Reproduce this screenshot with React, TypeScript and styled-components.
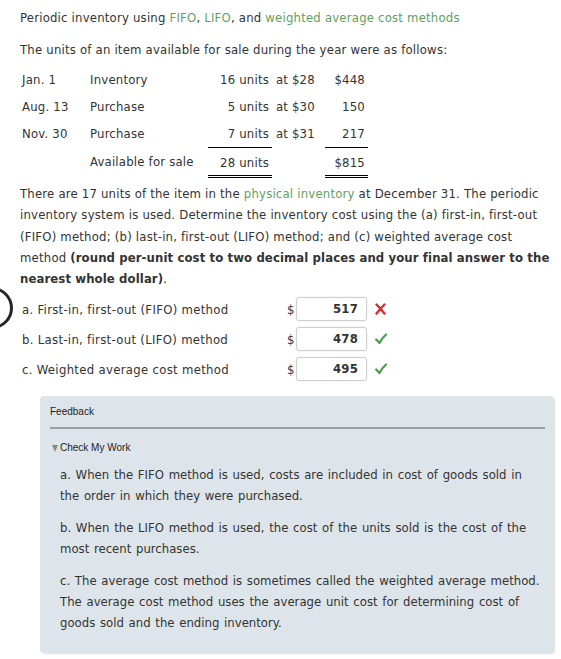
import React from 'react';
import styled, { createGlobalStyle } from 'styled-components';

const GlobalStyle = createGlobalStyle`
    body {
        margin: 0;
        background: #ffffff;
        font-family: 'DejaVu Sans Condensed', 'DejaVu Sans', sans-serif;
        font-size: 13px;
        letter-spacing: 0.2px;
        color: #333333;
    }
`;

const Page = styled.div`
    position: relative;
    width: 561px;
    height: 659px;
    overflow: hidden;
    padding: 7px 0 0 20px;
    box-sizing: border-box;
`;

const Line = styled.div`
    line-height: 21px;
    margin-bottom: 11px;
`;

const Term = styled.span`
    color: #5f9f5f;
`;

const Table = styled.div`
    display: grid;
    grid-template-columns: 68px 118px 64px 53px 43px;
    margin: -5px 0 0 2px;
`;

const Cell = styled.div<{ $right?: boolean; $top?: boolean; $total?: boolean }>`
    height: 27px;
    line-height: ${(p) => (p.$total ? '29px' : '27px')};
    text-align: ${(p) => (p.$right ? 'right' : 'left')};
    padding: ${(p) => (p.$right ? '0 3px 0 0' : '0')};
    border-top: ${(p) => (p.$top ? '1px solid #000' : 'none')};
    border-bottom: ${(p) => (p.$total ? '3px double #000' : 'none')};
    white-space: nowrap;
`;

const TotalLabel = styled.div`
    height: 27px;
    line-height: 29px;
    white-space: nowrap;
`;

const Para = styled.p`
    margin: 5px 0 0;
    width: 541px;
    line-height: 21.3px;
`;

const Strong = styled.b`
    letter-spacing: 0.1px;
`;

const Answers = styled.div`
    margin: 5px 0 0 2px;
`;

const AnswerRow = styled.div`
    display: flex;
    align-items: center;
    height: 30px;
`;

const AnswerLabel = styled.div`
    width: 265px;
    letter-spacing: 0.3px;
`;

const Dollar = styled.span`
    width: 9px;
    letter-spacing: 0;
`;

const AnswerBox = styled.div`
    width: 71px;
    height: 24px;
    box-sizing: border-box;
    border: 1px solid #cfcfcf;
    border-radius: 3px;
    box-shadow: 0 0 2px rgba(0, 0, 0, 0.12);
    background: #fff;
    text-align: right;
    padding-right: 8px;
    line-height: 22px;
    font-weight: bold;
    color: #333;
`;

const Mark = styled.span`
    display: flex;
    margin-left: 8px;
`;

const Feedback = styled.div`
    margin: 12px 0 0 20px;
    width: 514px;
    height: 257px;
    box-sizing: border-box;
    background: #dee5ea;
    border-radius: 4px;
    box-shadow: 1px 1px 2px rgba(0, 0, 0, 0.12);
    padding: 9px 9px 0 10px;
`;

const SmallTitle = styled.div`
    font-family: 'Liberation Sans', Arial, sans-serif;
    font-size: 10px;
    letter-spacing: 0;
    color: #222;
    line-height: 14px;
    padding-bottom: 8px;
    border-bottom: 2px solid #9aa0a4;
`;

const Toggle = styled.div`
    display: flex;
    align-items: center;
    font-family: 'Liberation Sans', Arial, sans-serif;
    font-size: 10px;
    letter-spacing: 0;
    color: #222;
    margin: 12px 0 0 2px;
    line-height: 14px;
`;

const Arrow = styled.span`
    width: 0;
    height: 0;
    border-left: 3px solid transparent;
    border-right: 3px solid transparent;
    border-top: 7px solid #8a8a8a;
    margin-right: 2px;
`;

const Explain = styled.p`
    margin: 9px 0 0 10px;
    width: 482px;
    line-height: 21px;
    letter-spacing: 0;
    word-spacing: 1px;
    & + & {
        margin-top: 11px;
    }
`;

const Ring = styled.div`
    position: absolute;
    left: -29px;
    top: 287px;
    width: 36px;
    height: 36px;
    border: 3px solid #262626;
    border-radius: 50%;
`;

const Cross = () => (
    <svg width="11" height="12" viewBox="0 0 11 12">
        <path d="M1.5 1.5 Q5 5 9.5 10.5 M9.5 1.5 Q5 6 1.5 10.5" stroke="#e0262b" strokeWidth="2.4" fill="none" strokeLinecap="round" />
    </svg>
);

const Check = () => (
    <svg width="12" height="12" viewBox="0 0 12 12">
        <path d="M1.2 6.5 L4.5 10 Q7 5 11 1.5" stroke="#4f9e4f" strokeWidth="2.3" fill="none" strokeLinecap="round" strokeLinejoin="round" />
    </svg>
);

const rows = [
    ['Jan. 1', 'Inventory', '16 units', 'at $28', '$448'],
    ['Aug. 13', 'Purchase', '5 units', 'at $30', '150'],
    ['Nov. 30', 'Purchase', '7 units', 'at $31', '217'],
];

const answers = [
    { label: 'a. First-in, first-out (FIFO) method', value: '517', ok: false },
    { label: 'b. Last-in, first-out (LIFO) method', value: '478', ok: true },
    { label: 'c. Weighted average cost method', value: '495', ok: true },
];

export default function App() {
    return (
        <Page>
            <GlobalStyle />
            <Ring />
            <Line>
                Periodic inventory using <Term>FIFO</Term>, <Term>LIFO</Term>, and{' '}
                <Term>weighted average cost methods</Term>
            </Line>
            <Line>The units of an item available for sale during the year were as follows:</Line>
            <Table>
                {rows.map((r) => (
                    <React.Fragment key={r[0]}>
                        <Cell>{r[0]}</Cell>
                        <Cell>{r[1]}</Cell>
                        <Cell $right>{r[2]}</Cell>
                        <Cell>&nbsp;{r[3]}</Cell>
                        <Cell $right>{r[4]}</Cell>
                    </React.Fragment>
                ))}
                <Cell />
                <TotalLabel>Available for sale</TotalLabel>
                <Cell $right $top $total>28 units</Cell>
                <Cell />
                <Cell $right $top $total>$815</Cell>
            </Table>
            <Para>
                There are 17 units of the item in the <Term>physical inventory</Term> at December 31. The
                periodic inventory system is used. Determine the inventory cost using the (a) first-in,
                first-out (FIFO) method; (b) last-in, first-out (LIFO) method; and (c) weighted average cost
                method <Strong>(round per-unit cost to two decimal places and your final answer to the nearest
                whole dollar)</Strong>.
            </Para>
            <Answers>
                {answers.map((a) => (
                    <AnswerRow key={a.label}>
                        <AnswerLabel>{a.label}</AnswerLabel>
                        <Dollar>$</Dollar>
                        <AnswerBox>{a.value}</AnswerBox>
                        <Mark>{a.ok ? <Check /> : <Cross />}</Mark>
                    </AnswerRow>
                ))}
            </Answers>
            <Feedback>
                <SmallTitle>Feedback</SmallTitle>
                <Toggle>
                    <Arrow />
                    Check My Work
                </Toggle>
                <Explain>
                    a. When the FIFO method is used, costs are included in cost of goods sold in the order in
                    which they were purchased.
                </Explain>
                <Explain>
                    b. When the LIFO method is used, the cost of the units sold is the cost of the most recent
                    purchases.
                </Explain>
                <Explain>
                    c. The average cost method is sometimes called the weighted average method. The average
                    cost method uses the average unit cost for determining cost of goods sold and the ending
                    inventory.
                </Explain>
            </Feedback>
        </Page>
    );
}
